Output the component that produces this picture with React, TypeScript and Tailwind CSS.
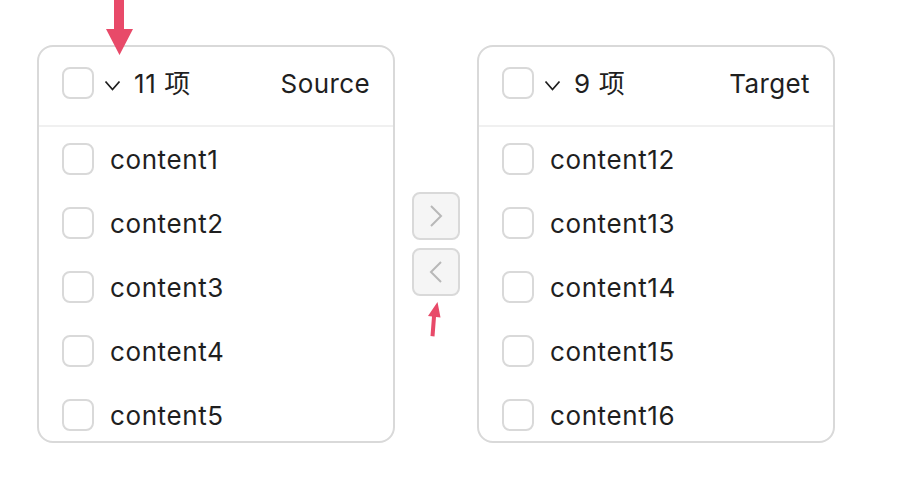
const source = ["content1", "content2", "content3", "content4", "content5"];
const target = ["content12", "content13", "content14", "content15", "content16"];

function Box() {
  return (
    <span className="block h-8 w-8 shrink-0 rounded-[8px] border-2 border-[#d9d9d9] bg-white" />
  );
}

function Chevron({ dir }: { dir: "down" | "left" | "right" }) {
  if (dir === "down") {
    return (
      <svg width="17" height="11" viewBox="0 0 17 11" className="shrink-0">
        <path d="M1.5 1.5 L8.5 9.5 L15.5 1.5" fill="none" stroke="#1f1f1f" strokeWidth="1.8" />
      </svg>
    );
  }
  return (
    <svg width="14" height="24" viewBox="0 0 14 24">
      <path
        d={dir === "right" ? "M2 2 L12 12 L2 22" : "M12 2 L2 12 L12 22"}
        fill="none"
        stroke="#b8b8b8"
        strokeWidth="2"
      />
    </svg>
  );
}

type PanelProps = {
  count: string;
  title: string;
  items: string[];
};

function Panel({ count, title, items }: PanelProps) {
  return (
    <div className="flex h-[398px] w-[358px] flex-col overflow-hidden rounded-[16px] border-2 border-[#d9d9d9] bg-white">
      <div className="flex h-[80px] shrink-0 items-center border-b-2 border-[#f0f0f0] px-[23px] pb-[6px]">
        <Box />
        <span className="ml-[10px] mr-[13px] flex items-center pt-[5px]">
          <Chevron dir="down" />
        </span>
        <span className="text-[26px] tracking-[0.6px] text-[#1f1f1f]">{count}</span>
        <span className="ml-auto text-[26px] tracking-[0.4px] text-[#1f1f1f]">{title}</span>
      </div>
      <div className="flex flex-col">
        {items.map((item) => (
          <div key={item} className="flex h-16 shrink-0 items-center px-[23px]">
            <Box />
            <span className="ml-4 text-[26px] tracking-[0.6px] text-[#1f1f1f]">{item}</span>
          </div>
        ))}
      </div>
    </div>
  );
}

export default function App() {
  return (
    <div
      className="relative h-[478px] w-[904px] bg-white"
      style={{ fontFamily: "Inter, 'Noto Sans CJK SC', sans-serif" }}
    >
      <div className="flex items-center pl-[37px] pt-[45px]">
        <Panel count="11 项" title="Source" items={source} />
        <div className="mx-[17px] flex flex-col gap-2">
          <button className="flex h-12 w-12 items-center justify-center rounded-[8px] border-2 border-[#d9d9d9] bg-[#f5f5f5]">
            <Chevron dir="right" />
          </button>
          <button className="flex h-12 w-12 items-center justify-center rounded-[8px] border-2 border-[#d9d9d9] bg-[#f5f5f5]">
            <Chevron dir="left" />
          </button>
        </div>
        <Panel count="9 项" title="Target" items={target} />
      </div>

      {/* annotation arrows */}
      <svg className="absolute left-0 top-0" width="904" height="478" viewBox="0 0 904 478">
        <polygon
          points="114,0 124,0 124,29 133,29 119.5,55 106,29 114,29"
          fill="#e84a69"
        />
        <polygon
          points="430.5,336 434.5,336.5 436,317 440.5,317.5 437.5,302 428,316 432,316.5"
          fill="#e84a69"
        />
      </svg>
    </div>
  );
}
